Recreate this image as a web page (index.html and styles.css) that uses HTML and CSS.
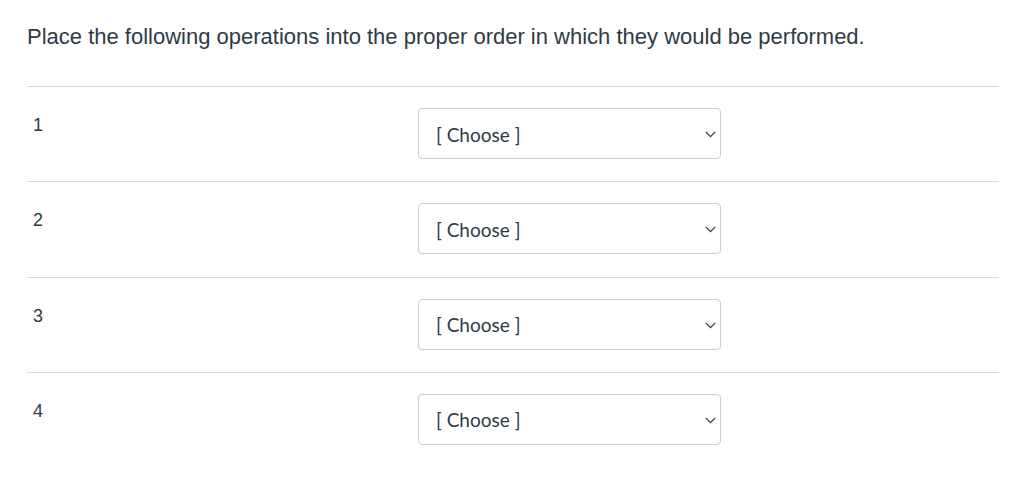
FILE: index.html
```html
<!DOCTYPE html>
<html>
<head>
<meta charset="utf-8">
<link rel="stylesheet" href="styles.css">
</head>
<body>
<div class="question">
  <p class="prompt">Place the following operations into the proper order in which they would be performed.</p>
  <div class="rows">
    <div class="row">
      <div class="num">1</div>
      <div class="select"><span>[ Choose ]</span><svg class="chev" viewBox="0 0 11 7" width="11" height="7"><path d="M0.8 0.9 L5.5 5.6 L10.2 0.9" fill="none" stroke="#2d3b45" stroke-width="1.3"/></svg></div>
    </div>
    <div class="row">
      <div class="num">2</div>
      <div class="select"><span>[ Choose ]</span><svg class="chev" viewBox="0 0 11 7" width="11" height="7"><path d="M0.8 0.9 L5.5 5.6 L10.2 0.9" fill="none" stroke="#2d3b45" stroke-width="1.3"/></svg></div>
    </div>
    <div class="row">
      <div class="num">3</div>
      <div class="select"><span>[ Choose ]</span><svg class="chev" viewBox="0 0 11 7" width="11" height="7"><path d="M0.8 0.9 L5.5 5.6 L10.2 0.9" fill="none" stroke="#2d3b45" stroke-width="1.3"/></svg></div>
    </div>
    <div class="row">
      <div class="num">4</div>
      <div class="select"><span>[ Choose ]</span><svg class="chev" viewBox="0 0 11 7" width="11" height="7"><path d="M0.8 0.9 L5.5 5.6 L10.2 0.9" fill="none" stroke="#2d3b45" stroke-width="1.3"/></svg></div>
    </div>
  </div>
</div>
</body>
</html>
```
FILE: styles.css
```css
html, body {
  margin: 0;
  padding: 0;
  background: #fff;
}
.question {
  width: 972px;
  margin-left: 27px;
  font-family: "Liberation Sans", Arial, sans-serif;
  color: #2d3b45;
}
.prompt {
  margin: 0;
  padding-top: 24px;
  font-size: 22px;
  line-height: 26px;
  box-sizing: border-box;
  height: 86px;
}
.row {
  border-top: 1px solid #dadada;
  height: 94.33px;
  display: flex;
  align-items: flex-start;
}
.num {
  width: 385px;
  padding-left: 6px;
  font-size: 18px;
  line-height: 20px;
  padding-top: 28px;
}
.select {
  margin-top: 21px;
  box-sizing: border-box;
  width: 303px;
  height: 51px;
  border: 1px solid #c7cdd1;
  border-radius: 4px;
  display: flex;
  align-items: center;
  justify-content: space-between;
  padding: 0 4px 0 17px;
  font-family: Lato, "Liberation Sans", sans-serif;
  font-size: 19px;
}
.select span { position: relative; top: 0.5px; }
.chev { position: relative; top: 1px; }
```
